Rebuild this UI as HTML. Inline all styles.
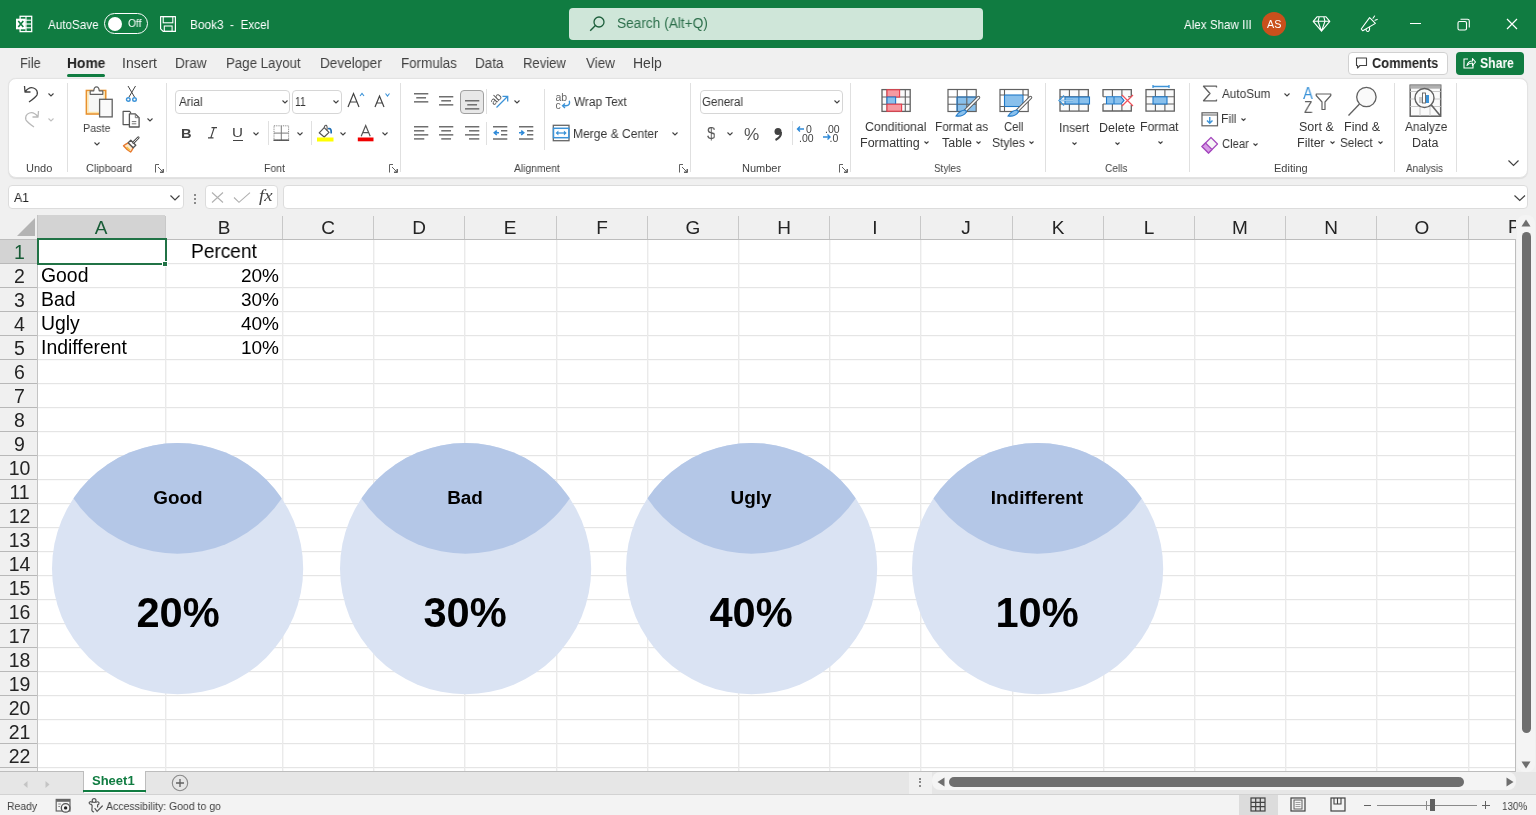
<!DOCTYPE html><html><head><meta charset="utf-8"><title>Excel</title><style>
*{margin:0;padding:0;box-sizing:border-box}
html,body{width:1536px;height:815px;overflow:hidden;background:#f0f0f0;font-family:"Liberation Sans", sans-serif;-webkit-font-smoothing:antialiased}
body>div.r,body>span.t{will-change:transform}
.r{position:absolute;display:block}
.t{position:absolute;white-space:pre;transform-origin:0 0}
svg{overflow:visible}
</style></head><body><div class="r" style="left:0px;top:0px;width:1536px;height:48px;background:#107c41;"></div>
<svg class="r" style="left:15px;top:15px" width="18" height="18" viewBox="0 0 18 18">
      <rect x="5.1" y="1.3" width="11.6" height="15.3" fill="none" stroke="#fff" stroke-width="1.3"/>
      <line x1="5" y1="5.2" x2="16.7" y2="5.2" stroke="#fff" stroke-width="1.1"/>
      <line x1="5" y1="9" x2="16.7" y2="9" stroke="#fff" stroke-width="1.1"/>
      <line x1="5" y1="12.8" x2="16.7" y2="12.8" stroke="#fff" stroke-width="1.1"/>
      <line x1="11" y1="1" x2="11" y2="17" stroke="#fff" stroke-width="1.1"/>
      <rect x="1" y="3.7" width="9.6" height="10.6" fill="#fff"/>
      <path d="M3.3 6 L8.3 12 M8.3 6 L3.3 12" stroke="#107c41" stroke-width="1.6"/>
    </svg>
<span id="autosave" class="t" style="left:48.00px;top:18.00px;font-size:13px;line-height:13px;color:#fff;transform:scaleX(0.8964);">AutoSave</span>
<div class="r" style="left:104px;top:13px;width:44px;height:21px;background:transparent;border:1px solid #fff;border-radius:11px;"></div>
<div class="r" style="left:108.2px;top:17px;width:14px;height:14px;background:#fff;border-radius:50%;"></div>
<span id="off" class="t" style="left:128.00px;top:17.99px;font-size:11px;line-height:11px;color:#fff;transform:scaleX(0.9333);">Off</span>
<svg class="r" style="left:160px;top:16px" width="16" height="16" viewBox="0 0 16 16">
      <path d="M0.6 0.6 H15.4 V15.4 H3.2 L0.6 12.8 Z" fill="none" stroke="#fff" stroke-width="1.2" stroke-linejoin="round"/>
      <rect x="3.2" y="0.6" width="9.6" height="6.2" fill="none" stroke="#fff" stroke-width="1.1"/>
      <rect x="4.3" y="10" width="7.8" height="5.4" fill="none" stroke="#fff" stroke-width="1.1"/>
    </svg>
<span id="book3" class="t" style="left:190.09px;top:18.00px;font-size:13px;line-height:13px;color:#fff;transform:scaleX(0.9070);">Book3  -  Excel</span>
<div class="r" style="left:569px;top:8px;width:414px;height:32px;background:#cfe6d9;border-radius:4px;"></div>
<svg class="r" style="left:589px;top:16px" width="16" height="16" viewBox="0 0 16 16">
      <circle cx="10" cy="6" r="5" fill="none" stroke="#1c5e3b" stroke-width="1.3"/>
      <line x1="6.4" y1="9.6" x2="1.2" y2="14.8" stroke="#1c5e3b" stroke-width="1.4"/>
    </svg>
<span id="search" class="t" style="left:616.82px;top:15.65px;font-size:14px;line-height:14px;color:#2b6e4a;transform:scaleX(0.9769);">Search (Alt+Q)</span>
<span id="alex" class="t" style="left:1184.00px;top:18.00px;font-size:13px;line-height:13px;color:#fff;transform:scaleX(0.8933);">Alex Shaw III</span>
<div class="r" style="left:1262px;top:12px;width:24px;height:24px;background:#c9501c;border-radius:50%;"></div>
<span id="as" class="t" style="left:1267.00px;top:19.54px;font-size:10px;line-height:10px;color:#fff;transform:scaleX(1.0769);">AS</span>
<svg class="r" style="left:1313px;top:15.5px" width="18" height="16" viewBox="0 0 18 16">
      <path d="M4 0.8 H13 L16.8 5.3 L8.5 15.2 L0.2 5.3 Z M0.2 5.3 H16.8 M6.2 0.8 L5 5.3 L8.5 15.2 L12 5.3 L10.8 0.8" fill="none" stroke="#fff" stroke-width="1.1" stroke-linejoin="round"/>
    </svg>
<svg class="r" style="left:1360px;top:15px" width="18" height="18" viewBox="0 0 18 18">
      <path d="M1.2 14 L9.6 2.6 L15.4 8.4 L2.8 15.8 Z" fill="none" stroke="#fff" stroke-width="1.1" stroke-linejoin="round"/>
      <path d="M6 14 Q6.2 16.8 8.2 16.4 Q10 15.8 9.5 12.2" fill="none" stroke="#fff" stroke-width="1.1"/>
      <path d="M13 3.2 L14.6 1 M15 5.2 L17.2 4.4" stroke="#fff" stroke-width="1.1" stroke-linecap="round"/>
    </svg>
<div class="r" style="left:1410px;top:23px;width:11px;height:1.2px;background:#fff;"></div>
<svg class="r" style="left:1457px;top:18px" width="14" height="13" viewBox="0 0 14 13">
      <rect x="1" y="3.5" width="8.5" height="8.5" rx="1.5" fill="none" stroke="#fff" stroke-width="1.1"/>
      <path d="M3.5 1.2 H10.5 Q12.3 1.2 12.3 3 V9.5" fill="none" stroke="#fff" stroke-width="1.1"/>
    </svg>
<svg class="r" style="left:1506px;top:18px" width="12" height="12" viewBox="0 0 12 12">
      <path d="M1 1 L11 11 M11 1 L1 11" stroke="#fff" stroke-width="1.2"/>
    </svg>
<div class="r" style="left:0px;top:48px;width:1536px;height:30px;background:#f0f0f0;"></div>
<span id="tab0" class="t" style="left:20.08px;top:55.75px;font-size:14px;line-height:14px;color:#424242;transform:scaleX(0.9190);">File</span>
<span id="tab1" class="t" style="left:66.51px;top:55.75px;font-size:14px;line-height:14px;color:#242424;font-weight:700;transform:scaleX(0.9868);">Home</span>
<span id="tab2" class="t" style="left:122.00px;top:55.75px;font-size:14px;line-height:14px;color:#424242;">Insert</span>
<span id="tab3" class="t" style="left:175.03px;top:55.75px;font-size:14px;line-height:14px;color:#424242;transform:scaleX(0.9688);">Draw</span>
<span id="tab4" class="t" style="left:226.05px;top:55.75px;font-size:14px;line-height:14px;color:#424242;transform:scaleX(0.9487);">Page Layout</span>
<span id="tab5" class="t" style="left:320.03px;top:55.75px;font-size:14px;line-height:14px;color:#424242;transform:scaleX(0.9683);">Developer</span>
<span id="tab6" class="t" style="left:401.04px;top:55.75px;font-size:14px;line-height:14px;color:#424242;transform:scaleX(0.9579);">Formulas</span>
<span id="tab7" class="t" style="left:475.03px;top:55.75px;font-size:14px;line-height:14px;color:#424242;transform:scaleX(0.9655);">Data</span>
<span id="tab8" class="t" style="left:523.07px;top:55.75px;font-size:14px;line-height:14px;color:#424242;transform:scaleX(0.9333);">Review</span>
<span id="tab9" class="t" style="left:585.60px;top:55.75px;font-size:14px;line-height:14px;color:#424242;transform:scaleX(0.9600);">View</span>
<span id="tab10" class="t" style="left:632.71px;top:55.75px;font-size:14px;line-height:14px;color:#424242;transform:scaleX(0.9857);">Help</span>
<div class="r" style="left:67px;top:74px;width:38px;height:3px;background:#107c41;border-radius:1.5px;"></div>
<div class="r" style="left:1348px;top:51.5px;width:99.5px;height:23px;background:#fff;border:1px solid #d1d1d1;border-radius:4px;"></div>
<svg class="r" style="left:1355px;top:57px" width="13" height="13" viewBox="0 0 13 13">
      <path d="M1.5 1 H11.5 V8.5 H5 L2.5 11 V8.5 H1.5 Z" fill="none" stroke="#424242" stroke-width="1.1" stroke-linejoin="round"/>
    </svg>
<span id="comments" class="t" style="left:1372.00px;top:56.15px;font-size:14px;line-height:14px;color:#242424;font-weight:700;transform:scaleX(0.9167);">Comments</span>
<div class="r" style="left:1456px;top:51.5px;width:67.5px;height:23px;background:#107c41;border-radius:4px;"></div>
<svg class="r" style="left:1462px;top:56px" width="14" height="14" viewBox="0 0 14 14">
      <path d="M6 3 H2 V12 H11 V9" fill="none" stroke="#fff" stroke-width="1.1"/>
      <path d="M5 9.5 Q6 5 10.5 5 V2.5 L13.5 6 L10.5 9.5 V7 Q7 7 5 9.5 Z" fill="none" stroke="#fff" stroke-width="1.1" stroke-linejoin="round"/>
    </svg>
<span id="share" class="t" style="left:1480.00px;top:56.15px;font-size:14px;line-height:14px;color:#fff;font-weight:700;transform:scaleX(0.8718);">Share</span>
<div class="r" style="left:8px;top:78px;width:1520px;height:99.5px;background:#fff;border:1px solid #e3e3e3;border-radius:8px;box-shadow:0 0.5px 1px rgba(0,0,0,0.08);"></div>
<div class="r" style="left:67px;top:83px;width:1px;height:89px;background:#e0e0e0;"></div>
<div class="r" style="left:166px;top:83px;width:1px;height:89px;background:#e0e0e0;"></div>
<div class="r" style="left:400px;top:83px;width:1px;height:89px;background:#e0e0e0;"></div>
<div class="r" style="left:690px;top:83px;width:1px;height:89px;background:#e0e0e0;"></div>
<div class="r" style="left:850px;top:83px;width:1px;height:89px;background:#e0e0e0;"></div>
<div class="r" style="left:1045px;top:83px;width:1px;height:89px;background:#e0e0e0;"></div>
<div class="r" style="left:1189px;top:83px;width:1px;height:89px;background:#e0e0e0;"></div>
<div class="r" style="left:1394px;top:83px;width:1px;height:89px;background:#e0e0e0;"></div>
<div class="r" style="left:1456px;top:83px;width:1px;height:89px;background:#e0e0e0;"></div>
<span id="lab0" class="t" style="left:25.81px;top:163.29px;font-size:11px;line-height:11px;color:#424242;transform:scaleX(0.9920);">Undo</span>
<span id="lab1" class="t" style="left:86.00px;top:163.29px;font-size:11px;line-height:11px;color:#424242;transform:scaleX(0.9787);">Clipboard</span>
<span id="lab2" class="t" style="left:264.05px;top:163.29px;font-size:11px;line-height:11px;color:#424242;transform:scaleX(0.9524);">Font</span>
<span id="lab3" class="t" style="left:514.00px;top:163.29px;font-size:11px;line-height:11px;color:#424242;transform:scaleX(0.9388);">Alignment</span>
<span id="lab4" class="t" style="left:742.00px;top:163.29px;font-size:11px;line-height:11px;color:#424242;">Number</span>
<span id="lab5" class="t" style="left:934.00px;top:163.29px;font-size:11px;line-height:11px;color:#424242;transform:scaleX(0.9000);">Styles</span>
<span id="lab6" class="t" style="left:1105.00px;top:163.29px;font-size:11px;line-height:11px;color:#424242;transform:scaleX(0.9167);">Cells</span>
<span id="lab7" class="t" style="left:1274.00px;top:163.29px;font-size:11px;line-height:11px;color:#424242;">Editing</span>
<span id="lab8" class="t" style="left:1406.00px;top:163.29px;font-size:11px;line-height:11px;color:#424242;transform:scaleX(0.9024);">Analysis</span>
<svg class="r" style="left:155px;top:164px" width="9" height="9" viewBox="0 0 9 9"><path d="M0.5 8.5 V0.5 H4 M8.5 5 V8.5 H5 M3 3 L8 8 M8 5 V8 H5" fill="none" stroke="#616161" stroke-width="1"/></svg>
<svg class="r" style="left:388.5px;top:164px" width="9" height="9" viewBox="0 0 9 9"><path d="M0.5 8.5 V0.5 H4 M8.5 5 V8.5 H5 M3 3 L8 8 M8 5 V8 H5" fill="none" stroke="#616161" stroke-width="1"/></svg>
<svg class="r" style="left:679px;top:164px" width="9" height="9" viewBox="0 0 9 9"><path d="M0.5 8.5 V0.5 H4 M8.5 5 V8.5 H5 M3 3 L8 8 M8 5 V8 H5" fill="none" stroke="#616161" stroke-width="1"/></svg>
<svg class="r" style="left:839px;top:164px" width="9" height="9" viewBox="0 0 9 9"><path d="M0.5 8.5 V0.5 H4 M8.5 5 V8.5 H5 M3 3 L8 8 M8 5 V8 H5" fill="none" stroke="#616161" stroke-width="1"/></svg>
<svg class="r" style="left:1508px;top:160px" width="12" height="7" viewBox="0 0 12 7"><path d="M0.5 0.5 L5.5 5.5 L10.5 0.5" fill="none" stroke="#424242" stroke-width="1.2"/></svg>
<svg class="r" style="left:23px;top:84px" width="17" height="18" viewBox="0 0 17 18"><path d="M2 8 L1.5 2 M1.5 8 H7.5 M2 8 Q6 2.5 10.5 4 Q15.5 6 14 11 Q13 13 6 18" fill="none" stroke="#424242" stroke-width="1.3" stroke-linejoin="round"/></svg>
<svg class="r" style="left:48px;top:93px" width="6" height="4.0" viewBox="0 0 6 4.0"><path d="M0.5 0.5 L3.0 3.0 L5.5 0.5" fill="none" stroke="#424242" stroke-width="1.1"/></svg>
<svg class="r" style="left:23px;top:109px" width="17" height="18" viewBox="0 0 17 18"><path d="M15 8 L15.5 2 M15.5 8 H9.5 M15 8 Q11 2.5 6.5 4 Q1.5 6 3 11 Q4 13 11 18" fill="none" stroke="#b9b9b9" stroke-width="1.3" stroke-linejoin="round"/></svg>
<svg class="r" style="left:48px;top:118px" width="6" height="4.0" viewBox="0 0 6 4.0"><path d="M0.5 0.5 L3.0 3.0 L5.5 0.5" fill="none" stroke="#c0c0c0" stroke-width="1.1"/></svg>
<svg class="r" style="left:84px;top:85px" width="30" height="34" viewBox="0 0 30 34">
      <rect x="2.4" y="5.5" width="19.3" height="23.5" fill="#f7f7f7" stroke="#e8912d" stroke-width="1.6"/><rect x="4" y="7.1" width="16.1" height="20.3" fill="none" stroke="#fde4a6" stroke-width="1.2"/>
      <path d="M6.2 9.3 V5.8 H9.8 Q10 1.8 12.5 1.8 Q15 1.8 15.2 5.8 H18.8 V9.3 Z" fill="#fff" stroke="#616161" stroke-width="1.2" stroke-linejoin="round"/>
      <rect x="15.6" y="14.3" width="12.6" height="17.6" fill="#fafafa" stroke="#616161" stroke-width="1.3"/>
    </svg>
<span id="paste" class="t" style="left:82.86px;top:122.87px;font-size:11.5px;line-height:11.5px;color:#424242;transform:scaleX(0.9357);">Paste</span>
<svg class="r" style="left:93.5px;top:142px" width="6" height="4.0" viewBox="0 0 6 4.0"><path d="M0.5 0.5 L3.0 3.0 L5.5 0.5" fill="none" stroke="#424242" stroke-width="1.1"/></svg>
<svg class="r" style="left:125px;top:85px" width="14" height="17" viewBox="0 0 14 17">
      <path d="M3 1 L9.5 12 M10.5 1 L4 12" stroke="#424242" stroke-width="1" fill="none"/>
      <circle cx="3.3" cy="14.5" r="1.8" fill="none" stroke="#3c93d8" stroke-width="1.4"/>
      <circle cx="9.5" cy="14.5" r="1.8" fill="none" stroke="#3c93d8" stroke-width="1.4"/>
    </svg>
<svg class="r" style="left:122px;top:110px" width="18" height="18" viewBox="0 0 18 18">
      <path d="M7.4 14.6 H1.1 V1.4 H7.6 L8.6 2.4 V3.6" fill="none" stroke="#555" stroke-width="1.2" stroke-linejoin="round"/>
      <path d="M7.4 3.9 H13.3 L17.1 7.7 V17 H7.4 Z" fill="#fff" stroke="#555" stroke-width="1.3" stroke-linejoin="round"/>
      <path d="M13.3 3.9 V7.7 H17.1 M9.8 11.6 H14.3 M9.8 13.8 H14.3" fill="none" stroke="#777" stroke-width="1"/>
    </svg>
<svg class="r" style="left:147.3px;top:117.6px" width="6" height="4.0" viewBox="0 0 6 4.0"><path d="M0.5 0.5 L3.0 3.0 L5.5 0.5" fill="none" stroke="#424242" stroke-width="1.1"/></svg>
<svg class="r" style="left:122px;top:136px" width="18" height="17" viewBox="0 0 18 17">
      <path d="M6.2 6.8 L11.2 11.8 Q10 14.5 8.6 16 Q4.5 13.5 1.5 9.8 Q4 7.8 6.2 6.8 Z" fill="#fdebd0" stroke="#e8792d" stroke-width="1.4" stroke-linejoin="round"/>
      <path d="M4.5 11 L8 14.3" stroke="#f5c04a" stroke-width="1.6"/>
      <path d="M8.8 4.2 L13.8 9.2 L11.2 11.8 L6.2 6.8 Z" fill="#fff" stroke="#555" stroke-width="1.3" stroke-linejoin="round"/>
      <path d="M11.5 6.5 L16.3 1.7" stroke="#555" stroke-width="2.6" stroke-linecap="round"/>
      <path d="M11.7 6.3 L16.1 1.9" stroke="#fff" stroke-width="0.8" stroke-linecap="round"/>
    </svg>
<div class="r" style="left:175px;top:89.5px;width:115px;height:24px;background:#fff;border:1px solid #d6d6d6;border-radius:4px;"></div>
<span id="arial" class="t" style="left:178.50px;top:95.92px;font-size:12.5px;line-height:12.5px;color:#363636;transform:scaleX(0.9400);">Arial</span>
<svg class="r" style="left:281.5px;top:100px" width="6" height="4.0" viewBox="0 0 6 4.0"><path d="M0.5 0.5 L3.0 3.0 L5.5 0.5" fill="none" stroke="#424242" stroke-width="1.1"/></svg>
<div class="r" style="left:292px;top:89.5px;width:49.5px;height:24px;background:#fff;border:1px solid #d6d6d6;border-radius:4px;"></div>
<span id="fs11" class="t" style="left:295.17px;top:95.92px;font-size:12.5px;line-height:12.5px;color:#363636;transform:scaleX(0.8333);">11</span>
<svg class="r" style="left:333px;top:100px" width="6" height="4.0" viewBox="0 0 6 4.0"><path d="M0.5 0.5 L3.0 3.0 L5.5 0.5" fill="none" stroke="#424242" stroke-width="1.1"/></svg>
<svg class="r" style="left:347px;top:92px" width="18" height="16" viewBox="0 0 18 16"><path d="M1 15 L6.5 1.5 L12 15 M3.2 10 H9.8" fill="none" stroke="#424242" stroke-width="1.2"/><path d="M13 4 L15 1.5 L17 4" fill="none" stroke="#3c93d8" stroke-width="1.1"/></svg>
<svg class="r" style="left:374px;top:92px" width="16" height="16" viewBox="0 0 16 16"><path d="M1 15 L5.5 4 L10 15 M2.8 11 H8.2" fill="none" stroke="#424242" stroke-width="1.2"/><path d="M11.5 1.5 L13.5 4 L15.5 1.5" fill="none" stroke="#3c93d8" stroke-width="1.1"/></svg>
<span id="bold" class="t" style="left:181.38px;top:126.50px;font-size:13px;line-height:13px;color:#424242;font-weight:700;transform:scaleX(1.1250);">B</span>
<svg class="r" style="left:207px;top:127px" width="11" height="12" viewBox="0 0 11 12"><path d="M4.5 0.6 H10 M1 10.9 H6.5 M7.2 0.6 L3.8 10.9" stroke="#424242" stroke-width="1.2" fill="none"/></svg>
<span id="undl" class="t" style="left:231.88px;top:126.07px;font-size:13.5px;line-height:13.5px;color:#424242;transform:scaleX(1.1250);">U</span>
<div class="r" style="left:233px;top:139.5px;width:9.5px;height:1.2px;background:#424242;"></div>
<svg class="r" style="left:253px;top:132px" width="6" height="4.0" viewBox="0 0 6 4.0"><path d="M0.5 0.5 L3.0 3.0 L5.5 0.5" fill="none" stroke="#424242" stroke-width="1.1"/></svg>
<div class="r" style="left:267.5px;top:121px;width:1px;height:24px;background:#e0e0e0;"></div>
<svg class="r" style="left:273px;top:125px" width="17" height="17" viewBox="0 0 17 17"><rect x="1" y="0.8" width="14.6" height="14.6" fill="none" stroke="#8a8a8a" stroke-width="1" stroke-dasharray="1 0.8"/><path d="M8.3 0.8 V15 M1 8.1 H15.6" stroke="#7a7a7a" stroke-width="1"/><path d="M0.5 15.2 H16.1" stroke="#555" stroke-width="1.5"/></svg>
<svg class="r" style="left:297px;top:132px" width="6" height="4.0" viewBox="0 0 6 4.0"><path d="M0.5 0.5 L3.0 3.0 L5.5 0.5" fill="none" stroke="#424242" stroke-width="1.1"/></svg>
<div class="r" style="left:310.5px;top:121px;width:1px;height:24px;background:#e0e0e0;"></div>
<svg class="r" style="left:316px;top:124px" width="19" height="19" viewBox="0 0 19 19">
      <path d="M3.2 8.8 L8.2 3.6 L13 8.4 L8.2 13 Z" fill="none" stroke="#555" stroke-width="1.2" stroke-linejoin="round"/>
      <path d="M8.2 3.6 Q8.8 0.8 10.2 1.3 Q11.5 1.8 11 6.4" fill="none" stroke="#555" stroke-width="1.1"/>
      <path d="M12.8 4.6 Q15.4 4.2 15.2 8.8" fill="none" stroke="#1f6fb5" stroke-width="1.7" stroke-linecap="round"/>
      <rect x="1" y="13.5" width="16.5" height="4" fill="#ffff00"/>
    </svg>
<svg class="r" style="left:340px;top:132px" width="6" height="4.0" viewBox="0 0 6 4.0"><path d="M0.5 0.5 L3.0 3.0 L5.5 0.5" fill="none" stroke="#424242" stroke-width="1.1"/></svg>
<svg class="r" style="left:356px;top:124px" width="18" height="19" viewBox="0 0 18 19">
      <path d="M5.2 12.3 L9.7 1.5 L14.2 12.3 M6.7 8.6 H12.7" fill="none" stroke="#555" stroke-width="1.2"/>
      <rect x="1.8" y="13.5" width="15.7" height="3.8" fill="#f00000"/>
    </svg>
<svg class="r" style="left:382px;top:132px" width="6" height="4.0" viewBox="0 0 6 4.0"><path d="M0.5 0.5 L3.0 3.0 L5.5 0.5" fill="none" stroke="#424242" stroke-width="1.1"/></svg>
<svg class="r" style="left:413.7px;top:93.2px" width="14.3" height="12.149999999999999" viewBox="0 0 14.3 12.149999999999999"><path d="M0 0.75 H14.3" stroke="#6e6e6e" stroke-width="1.5"/><path d="M2.25 4.8 H12.05" stroke="#6e6e6e" stroke-width="1.5"/><path d="M0 8.85 H14.3" stroke="#6e6e6e" stroke-width="1.5"/></svg>
<svg class="r" style="left:439.2px;top:96.2px" width="14.3" height="12.149999999999999" viewBox="0 0 14.3 12.149999999999999"><path d="M0 0.75 H14.3" stroke="#6e6e6e" stroke-width="1.5"/><path d="M2.25 4.8 H12.05" stroke="#6e6e6e" stroke-width="1.5"/><path d="M0 8.85 H14.3" stroke="#6e6e6e" stroke-width="1.5"/></svg>
<div class="r" style="left:460px;top:89.5px;width:24px;height:24px;background:#e8e8e8;border:1px solid #a0a0a0;border-radius:4px;"></div>
<svg class="r" style="left:465px;top:100.3px" width="14.3" height="12.149999999999999" viewBox="0 0 14.3 12.149999999999999"><path d="M0 0.75 H14.3" stroke="#6e6e6e" stroke-width="1.5"/><path d="M2.25 4.8 H12.05" stroke="#6e6e6e" stroke-width="1.5"/><path d="M0 8.85 H14.3" stroke="#6e6e6e" stroke-width="1.5"/></svg>
<div class="r" style="left:485.5px;top:89px;width:1px;height:24.5px;background:#e0e0e0;"></div>
<svg class="r" style="left:490px;top:91px" width="20" height="18" viewBox="0 0 20 18">
      <text x="-0.5" y="12" font-size="11" font-family="Liberation Sans" fill="#555" transform="rotate(-45 5 8)">ab</text>
      <path d="M6.5 16.5 L17.5 5.5 M12.5 5.3 H17.7 V10.5" fill="none" stroke="#3c93d8" stroke-width="1.3"/>
    </svg>
<svg class="r" style="left:514px;top:99.5px" width="6" height="4.0" viewBox="0 0 6 4.0"><path d="M0.5 0.5 L3.0 3.0 L5.5 0.5" fill="none" stroke="#424242" stroke-width="1.1"/></svg>
<div class="r" style="left:543.5px;top:89px;width:1px;height:61px;background:#e0e0e0;"></div>
<svg class="r" style="left:413.7px;top:126.2px" width="14.3" height="16.2" viewBox="0 0 14.3 16.2"><path d="M0 0.75 H14.3" stroke="#6e6e6e" stroke-width="1.5"/><path d="M0 4.8 H10.3" stroke="#6e6e6e" stroke-width="1.5"/><path d="M0 8.85 H14.3" stroke="#6e6e6e" stroke-width="1.5"/><path d="M0 12.899999999999999 H10.3" stroke="#6e6e6e" stroke-width="1.5"/></svg>
<svg class="r" style="left:439.2px;top:126.2px" width="14.3" height="16.2" viewBox="0 0 14.3 16.2"><path d="M0 0.75 H14.3" stroke="#6e6e6e" stroke-width="1.5"/><path d="M2.25 4.8 H12.05" stroke="#6e6e6e" stroke-width="1.5"/><path d="M0 8.85 H14.3" stroke="#6e6e6e" stroke-width="1.5"/><path d="M2.25 12.899999999999999 H12.05" stroke="#6e6e6e" stroke-width="1.5"/></svg>
<svg class="r" style="left:465px;top:126.2px" width="14.3" height="16.2" viewBox="0 0 14.3 16.2"><path d="M0 0.75 H14.3" stroke="#6e6e6e" stroke-width="1.5"/><path d="M4 4.8 H14.3" stroke="#6e6e6e" stroke-width="1.5"/><path d="M0 8.85 H14.3" stroke="#6e6e6e" stroke-width="1.5"/><path d="M4 12.899999999999999 H14.3" stroke="#6e6e6e" stroke-width="1.5"/></svg>
<div class="r" style="left:485.5px;top:122px;width:1px;height:23px;background:#e0e0e0;"></div>
<svg class="r" style="left:493px;top:126px" width="15" height="14" viewBox="0 0 15 14"><path d="M0 0.75 H14.3 M8 4.8 H14.3 M8 8.85 H14.3 M0 12.9 H14.3" stroke="#6e6e6e" stroke-width="1.5"/><path d="M6 6.8 H1.5 M3.8 4.6 L1.3 6.8 L3.8 9" fill="none" stroke="#2f8ad8" stroke-width="1.6"/></svg>
<svg class="r" style="left:518.5px;top:126px" width="15" height="14" viewBox="0 0 15 14"><path d="M0 0.75 H14.3 M8 4.8 H14.3 M8 8.85 H14.3 M0 12.9 H14.3" stroke="#6e6e6e" stroke-width="1.5"/><path d="M0 6.8 H4.5 M2.2 4.6 L4.7 6.8 L2.2 9" fill="none" stroke="#2f8ad8" stroke-width="1.6"/></svg>
<svg class="r" style="left:555px;top:93px" width="17" height="18" viewBox="0 0 17 18">
      <text x="0.5" y="8.4" font-size="10.5" font-family="Liberation Sans" fill="#666">ab</text>
      <text x="0.5" y="15.8" font-size="10.5" font-family="Liberation Sans" fill="#666">c</text>
      <path d="M14.3 7.8 Q15.6 12.6 10.8 12.8 H8" fill="none" stroke="#3c93d8" stroke-width="1.4"/>
      <path d="M10 10.6 L7.6 12.8 L10 15" fill="none" stroke="#3c93d8" stroke-width="1.4"/>
    </svg>
<span id="wrap" class="t" style="left:574.00px;top:95.92px;font-size:12.5px;line-height:12.5px;color:#363636;transform:scaleX(0.9464);">Wrap Text</span>
<svg class="r" style="left:552px;top:124px" width="18" height="18" viewBox="0 0 18 18">
      <rect x="1.3" y="1.3" width="15.7" height="15.4" fill="#fff" stroke="#666" stroke-width="1.3"/>
      <rect x="1.5" y="4.3" width="15.3" height="9.4" fill="#fff" stroke="#3c93d8" stroke-width="1.5"/>
      <path d="M6 9 H12.3" stroke="#3c93d8" stroke-width="1.3"/>
      <path d="M3.6 9 L6.4 6.6 V11.4 Z M14.7 9 L11.9 6.6 V11.4 Z" fill="#3c93d8"/>
    </svg>
<span id="merge" class="t" style="left:573.03px;top:127.92px;font-size:12.5px;line-height:12.5px;color:#363636;transform:scaleX(0.9655);">Merge &amp; Center</span>
<svg class="r" style="left:672px;top:132px" width="6" height="4.0" viewBox="0 0 6 4.0"><path d="M0.5 0.5 L3.0 3.0 L5.5 0.5" fill="none" stroke="#424242" stroke-width="1.1"/></svg>
<div class="r" style="left:699.5px;top:89.5px;width:143px;height:24px;background:#fff;border:1px solid #d6d6d6;border-radius:4px;"></div>
<span id="general" class="t" style="left:701.50px;top:95.92px;font-size:12.5px;line-height:12.5px;color:#363636;transform:scaleX(0.9205);">General</span>
<svg class="r" style="left:834px;top:100px" width="6" height="4.0" viewBox="0 0 6 4.0"><path d="M0.5 0.5 L3.0 3.0 L5.5 0.5" fill="none" stroke="#424242" stroke-width="1.1"/></svg>
<span id="dollar" class="t" style="left:706.50px;top:125.96px;font-size:16px;line-height:16px;color:#555;transform:scaleX(0.9444);">$</span>
<svg class="r" style="left:727px;top:132px" width="6" height="4.0" viewBox="0 0 6 4.0"><path d="M0.5 0.5 L3.0 3.0 L5.5 0.5" fill="none" stroke="#424242" stroke-width="1.1"/></svg>
<span id="pct" class="t" style="left:744.00px;top:126.96px;font-size:16px;line-height:16px;color:#555;transform:scaleX(1.0714);">%</span>
<svg class="r" style="left:773px;top:127px" width="10" height="14" viewBox="0 0 10 14"><circle cx="5" cy="4.5" r="3.5" fill="#424242"/><path d="M8 5 Q8.5 10 2.5 13" fill="none" stroke="#424242" stroke-width="2"/></svg>
<div class="r" style="left:791.5px;top:121px;width:1px;height:24px;background:#e0e0e0;"></div>
<svg class="r" style="left:796px;top:124px" width="18" height="18" viewBox="0 0 18 18">
      <path d="M8 5 H1.5 M4 2.5 L1.5 5 L4 7.5" fill="none" stroke="#2f8ad8" stroke-width="1.4"/>
      <text x="10" y="9" font-size="10.5" font-family="Liberation Sans" fill="#424242">0</text>
      <text x="3" y="17.5" font-size="10.5" font-family="Liberation Sans" fill="#424242">.00</text>
    </svg>
<svg class="r" style="left:822px;top:124px" width="18" height="18" viewBox="0 0 18 18">
      <text x="3" y="9" font-size="10.5" font-family="Liberation Sans" fill="#424242">.00</text>
      <path d="M1 13 H8 M5.5 10.5 L8 13 L5.5 15.5" fill="none" stroke="#2f8ad8" stroke-width="1.4"/>
      <text x="7.5" y="17.5" font-size="10.5" font-family="Liberation Sans" fill="#424242">.0</text>
    </svg>
<svg class="r" style="left:881px;top:89px" width="30" height="23" viewBox="0 0 30 23">
      <rect x="1" y="0.6" width="28.2" height="21.8" fill="#fafafa" stroke="#616161" stroke-width="1.3"/>
      <path d="M1 8 H29 M1 15.2 H29 M6 0.6 V22.4 M24.3 0.6 V22.4" stroke="#616161" stroke-width="1.1"/>
      <rect x="6" y="0.8" width="12.6" height="7.2" fill="#f59aa2" stroke="#e83c4a" stroke-width="1.1"/>
      <rect x="6" y="8" width="8.6" height="7.2" fill="#89c0ec" stroke="#1f78c8" stroke-width="1.1"/>
      <rect x="6" y="15.2" width="14.6" height="7" fill="#f59aa2" stroke="#e83c4a" stroke-width="1.1"/>
    </svg>
<span id="cf1" class="t" style="left:865.00px;top:120.92px;font-size:12.5px;line-height:12.5px;color:#363636;transform:scaleX(0.9839);">Conditional</span>
<span id="cf2" class="t" style="left:860.00px;top:136.92px;font-size:12.5px;line-height:12.5px;color:#363636;">Formatting</span>
<svg class="r" style="left:923.5px;top:141px" width="5" height="3.5" viewBox="0 0 5 3.5"><path d="M0.5 0.5 L2.5 2.5 L4.5 0.5" fill="none" stroke="#424242" stroke-width="1.1"/></svg>
<svg class="r" style="left:947px;top:89px" width="33" height="29" viewBox="0 0 33 29">
      <rect x="10" y="8" width="19" height="14.5" fill="#89c0ec"/>
      <rect x="1" y="0.5" width="28.2" height="22" fill="none" stroke="#616161" stroke-width="1.2"/>
      <path d="M1 8 H29 M1 15.2 H29 M10.3 0.5 V22.5 M19.8 0.5 V22.5" stroke="#616161" stroke-width="1.1"/>
      <path d="M10 8 H29 M10 8 V22.5" stroke="#1f78c8" stroke-width="1.1"/>
      <path d="M31.5 8.5 L18 22" stroke="#616161" stroke-width="3.5" stroke-linecap="round"/>
      <path d="M31.5 8.5 L18 22" stroke="#fff" stroke-width="1.5" stroke-linecap="round"/>
      <path d="M18.5 21 Q13 21 9 27 Q16 28 19.5 23 Z" fill="#89c0ec" stroke="#1f78c8" stroke-width="1.1"/>
    </svg>
<span id="fat1" class="t" style="left:935.05px;top:120.92px;font-size:12.5px;line-height:12.5px;color:#363636;transform:scaleX(0.9455);">Format as</span>
<span id="fat2" class="t" style="left:942.00px;top:136.92px;font-size:12.5px;line-height:12.5px;color:#363636;">Table</span>
<svg class="r" style="left:976px;top:141px" width="5" height="3.5" viewBox="0 0 5 3.5"><path d="M0.5 0.5 L2.5 2.5 L4.5 0.5" fill="none" stroke="#424242" stroke-width="1.1"/></svg>
<svg class="r" style="left:999px;top:89px" width="33" height="29" viewBox="0 0 33 29">
      <rect x="5.5" y="6" width="18.5" height="11.5" fill="#89c0ec" stroke="#1f78c8" stroke-width="1.1"/>
      <rect x="1" y="0.5" width="28.2" height="22" fill="none" stroke="#616161" stroke-width="1.2"/>
      <path d="M1 6 H5.5 M1 17.5 H5.5 M24 6 H29 M5.5 0.5 V6 M24 0.5 V6 M5.5 17.5 V22.5" stroke="#616161" stroke-width="1.1"/>
      <path d="M31.5 8.5 L18 22" stroke="#616161" stroke-width="3.5" stroke-linecap="round"/>
      <path d="M31.5 8.5 L18 22" stroke="#fff" stroke-width="1.5" stroke-linecap="round"/>
      <path d="M18.5 21 Q13 21 9 27 Q16 28 19.5 23 Z" fill="#89c0ec" stroke="#1f78c8" stroke-width="1.1"/>
    </svg>
<span id="cs1" class="t" style="left:1004.00px;top:120.92px;font-size:12.5px;line-height:12.5px;color:#363636;transform:scaleX(0.9048);">Cell</span>
<span id="cs2" class="t" style="left:992.03px;top:136.92px;font-size:12.5px;line-height:12.5px;color:#363636;transform:scaleX(0.9697);">Styles</span>
<svg class="r" style="left:1029px;top:141px" width="5" height="3.5" viewBox="0 0 5 3.5"><path d="M0.5 0.5 L2.5 2.5 L4.5 0.5" fill="none" stroke="#424242" stroke-width="1.1"/></svg>
<svg class="r" style="left:1058px;top:89px" width="33" height="23" viewBox="0 0 33 23"><rect x="2" y="0.6" width="28.3" height="21.5" fill="#fafafa" stroke="#616161" stroke-width="1.3"/>
      <path d="M2 7.8 H30.3 M2 15 H30.3 M11.4 0.6 V22 M20.9 0.6 V22" stroke="#616161" stroke-width="1.1"/>
      <rect x="7" y="8" width="24.5" height="7" fill="#89c0ec" stroke="#1f78c8" stroke-width="1.1"/>
      <path d="M20.9 8 V15" stroke="#1f78c8" stroke-width="1"/>
      <path d="M15 11.5 H1.5 M6 6.5 L1 11.5 L6 16.5" fill="none" stroke="#3c93d8" stroke-width="1.3"/>
      <path d="M15 11.5 H1.5" stroke="#fff" stroke-width="0.5"/>
    </svg>
<svg class="r" style="left:1102px;top:89px" width="33" height="23" viewBox="0 0 33 23">
      <path d="M1 7.8 V0.6 H29.3 V7.8 M1 15 V22 H29.3 V16" fill="#fafafa" stroke="#616161" stroke-width="1.3"/>
      <path d="M10.4 0.6 V7.8 M19.9 0.6 V7.8 M10.4 15 V22 M19.9 15 V22 M1 7.8 H4 M1 15 H4 M26 7.8 H29.3" stroke="#616161" stroke-width="1.1"/>
      <path d="M4.5 7.8 H19 L22 11.4 L19 15 H4.5 Z" fill="#89c0ec" stroke="#1f78c8" stroke-width="1.1"/>
      <path d="M12 7.8 V15" stroke="#1f78c8" stroke-width="1"/>
      <path d="M20 6 L31 17 M31 6 L20 17" stroke="#f0505a" stroke-width="1.2"/>
    </svg>
<svg class="r" style="left:1145px;top:85px" width="31" height="28" viewBox="0 0 31 28">
      <path d="M8 1.5 H24 M8 0 V3 M24 0 V3" stroke="#3c93d8" stroke-width="1.3"/>
      <g transform="translate(0,4)"><rect x="1" y="0.6" width="28.3" height="21.5" fill="#fafafa" stroke="#616161" stroke-width="1.3"/>
      <path d="M1 7.8 H29.3 M1 15 H29.3 M10.4 0.6 V22 M19.9 0.6 V22" stroke="#616161" stroke-width="1.1"/>
      <rect x="8" y="7.8" width="14" height="7.2" fill="#89c0ec" stroke="#1f78c8" stroke-width="1.1"/></g>
    </svg>
<span id="ins" class="t" style="left:1059.03px;top:122.42px;font-size:12.5px;line-height:12.5px;color:#363636;transform:scaleX(0.9667);">Insert</span>
<svg class="r" style="left:1071.5px;top:142px" width="5" height="3.5" viewBox="0 0 5 3.5"><path d="M0.5 0.5 L2.5 2.5 L4.5 0.5" fill="none" stroke="#424242" stroke-width="1.1"/></svg>
<span id="del" class="t" style="left:1099.00px;top:122.42px;font-size:12.5px;line-height:12.5px;color:#363636;">Delete</span>
<svg class="r" style="left:1114.5px;top:142px" width="5" height="3.5" viewBox="0 0 5 3.5"><path d="M0.5 0.5 L2.5 2.5 L4.5 0.5" fill="none" stroke="#424242" stroke-width="1.1"/></svg>
<span id="fmt" class="t" style="left:1140.03px;top:120.92px;font-size:12.5px;line-height:12.5px;color:#363636;transform:scaleX(0.9744);">Format</span>
<svg class="r" style="left:1157.5px;top:141px" width="5" height="3.5" viewBox="0 0 5 3.5"><path d="M0.5 0.5 L2.5 2.5 L4.5 0.5" fill="none" stroke="#424242" stroke-width="1.1"/></svg>
<svg class="r" style="left:1202px;top:85px" width="16" height="17" viewBox="0 0 16 17"><path d="M14.5 2.5 V1.2 H1.5 L8 8.5 L1.5 15.8 H14.5 V14.5" fill="none" stroke="#616161" stroke-width="1.3" stroke-linejoin="round"/></svg>
<span id="autosum" class="t" style="left:1222.00px;top:88.02px;font-size:12.5px;line-height:12.5px;color:#363636;transform:scaleX(0.9412);">AutoSum</span>
<svg class="r" style="left:1283.5px;top:93px" width="6" height="4.0" viewBox="0 0 6 4.0"><path d="M0.5 0.5 L3.0 3.0 L5.5 0.5" fill="none" stroke="#424242" stroke-width="1.1"/></svg>
<svg class="r" style="left:1201px;top:112px" width="18" height="15" viewBox="0 0 18 15">
      <rect x="1" y="0.8" width="15.5" height="13" fill="#fff" stroke="#616161" stroke-width="1.2"/>
      <path d="M1 3 H16.5" stroke="#616161" stroke-width="1"/>
      <path d="M8.75 5 V11 M6 8.5 L8.75 11.3 L11.5 8.5" fill="none" stroke="#3c93d8" stroke-width="1.4"/>
    </svg>
<span id="fill" class="t" style="left:1221.03px;top:113.42px;font-size:12.5px;line-height:12.5px;color:#363636;transform:scaleX(0.9667);">Fill</span>
<svg class="r" style="left:1241px;top:118px" width="5" height="3.5" viewBox="0 0 5 3.5"><path d="M0.5 0.5 L2.5 2.5 L4.5 0.5" fill="none" stroke="#424242" stroke-width="1.1"/></svg>
<svg class="r" style="left:1201px;top:136px" width="18" height="18" viewBox="0 0 18 18">
      <path d="M1 10.5 L10 1.5 L16.5 8 L7.5 17 Z" fill="#f6f6f6" stroke="#a74cbf" stroke-width="1.3" stroke-linejoin="round"/>
      <path d="M1 10.5 L4.5 7 L11 13.5 L7.5 17 Z" fill="#d79ae6" stroke="#a74cbf" stroke-width="1.3" stroke-linejoin="round"/>
    </svg>
<span id="clear" class="t" style="left:1222.00px;top:138.42px;font-size:12.5px;line-height:12.5px;color:#363636;transform:scaleX(0.9000);">Clear</span>
<svg class="r" style="left:1253px;top:143px" width="5" height="3.5" viewBox="0 0 5 3.5"><path d="M0.5 0.5 L2.5 2.5 L4.5 0.5" fill="none" stroke="#424242" stroke-width="1.1"/></svg>
<span id="sortA" class="t" style="left:1303.30px;top:85.96px;font-size:16px;line-height:16px;color:#3c93d8;transform:scaleX(0.9273);">A</span>
<span id="sortZ" class="t" style="left:1303.50px;top:100.06px;font-size:16px;line-height:16px;color:#616161;transform:scaleX(0.8500);">Z</span>
<svg class="r" style="left:1315px;top:93px" width="18" height="18" viewBox="0 0 18 18"><path d="M1.2 1 H15.8 V2.5 L10 9 V16.5 H7 V9 L1.2 2.5 Z" fill="none" stroke="#616161" stroke-width="1.2" stroke-linejoin="round"/></svg>
<span id="sort1" class="t" style="left:1299.00px;top:120.92px;font-size:12.5px;line-height:12.5px;color:#363636;">Sort &amp;</span>
<span id="sort2" class="t" style="left:1297.00px;top:136.92px;font-size:12.5px;line-height:12.5px;color:#363636;">Filter</span>
<svg class="r" style="left:1329.5px;top:141px" width="5" height="3.5" viewBox="0 0 5 3.5"><path d="M0.5 0.5 L2.5 2.5 L4.5 0.5" fill="none" stroke="#424242" stroke-width="1.1"/></svg>
<svg class="r" style="left:1347px;top:86px" width="32" height="31" viewBox="0 0 32 31"><circle cx="19.4" cy="11" r="9.7" fill="#fafafa" stroke="#616161" stroke-width="1.3"/><path d="M12.5 18 L1.5 29.5" stroke="#616161" stroke-width="1.3"/></svg>
<span id="find1" class="t" style="left:1344.00px;top:120.92px;font-size:12.5px;line-height:12.5px;color:#363636;">Find &amp;</span>
<span id="find2" class="t" style="left:1340.06px;top:136.92px;font-size:12.5px;line-height:12.5px;color:#363636;transform:scaleX(0.9412);">Select</span>
<svg class="r" style="left:1377.5px;top:141px" width="5" height="3.5" viewBox="0 0 5 3.5"><path d="M0.5 0.5 L2.5 2.5 L4.5 0.5" fill="none" stroke="#424242" stroke-width="1.1"/></svg>
<svg class="r" style="left:1409px;top:84px" width="34" height="34" viewBox="0 0 34 34">
      <rect x="1.2" y="1.2" width="30.5" height="31" fill="#fafafa" stroke="#616161" stroke-width="1.5"/>
      <rect x="1.2" y="1.2" width="30.5" height="3.5" fill="#b0b0b0"/>
      <path d="M1.2 7.5 H31.7 M1.2 15 H31.7 M1.2 22.5 H31.7 M11 22 V32 M21 22 V32" stroke="#c8c8c8" stroke-width="1"/>
      <circle cx="15.5" cy="14" r="9.5" fill="#fafafa" stroke="#616161" stroke-width="1.4"/>
      <rect x="10" y="13" width="3" height="6" fill="#c8c8c8"/>
      <rect x="13.5" y="9" width="3" height="10" fill="#fff" stroke="#616161" stroke-width="0.9"/>
      <rect x="17" y="11" width="3" height="8" fill="#3c93d8"/>
      <path d="M22 20.5 L31 31.5" stroke="#616161" stroke-width="1.6"/>
    </svg>
<span id="an1" class="t" style="left:1405.00px;top:120.92px;font-size:12.5px;line-height:12.5px;color:#363636;transform:scaleX(0.9545);">Analyze</span>
<span id="an2" class="t" style="left:1412.00px;top:136.92px;font-size:12.5px;line-height:12.5px;color:#363636;">Data</span>
<div class="r" style="left:8px;top:185px;width:176px;height:23.5px;background:#fff;border:1px solid #dcdcdc;border-radius:4px;"></div>
<span id="a1" class="t" style="left:13.70px;top:190.80px;font-size:13px;line-height:13px;color:#242424;transform:scaleX(0.9375);">A1</span>
<svg class="r" style="left:170px;top:195px" width="10" height="6" viewBox="0 0 10 6"><path d="M0.5 0.5 L5 5 L9.5 0.5" fill="none" stroke="#424242" stroke-width="1.2"/></svg>
<div class="r" style="left:193.8px;top:193.5px;width:1.6px;height:1.6px;background:#8a8a8a;"></div>
<div class="r" style="left:193.8px;top:197.5px;width:1.6px;height:1.6px;background:#8a8a8a;"></div>
<div class="r" style="left:193.8px;top:201.5px;width:1.6px;height:1.6px;background:#8a8a8a;"></div>
<div class="r" style="left:205px;top:185px;width:73px;height:23.5px;background:#fff;border:1px solid #dcdcdc;border-radius:4px;"></div>
<svg class="r" style="left:211px;top:192px" width="13" height="11" viewBox="0 0 13 11"><path d="M1 0.5 L12 10.5 M12 0.5 L1 10.5" stroke="#b0b0b0" stroke-width="1.1"/></svg>
<svg class="r" style="left:233px;top:192px" width="18" height="11" viewBox="0 0 18 11"><path d="M1 5.5 L6 10.3 L17 0.7" fill="none" stroke="#b0b0b0" stroke-width="1.1"/></svg>
<span id="fx" class="t" style="left:259.00px;top:188.46px;font-size:16px;line-height:16px;color:#424242;font-style:italic;font-family:'Liberation Serif', serif;transform:scaleX(1.1667);">fx</span>
<div class="r" style="left:282.5px;top:185px;width:1244.5px;height:23.5px;background:#fff;border:1px solid #dcdcdc;border-radius:4px;"></div>
<svg class="r" style="left:1514px;top:195px" width="12" height="7" viewBox="0 0 12 7"><path d="M0.5 0.5 L5.75 5.5 L11 0.5" fill="none" stroke="#424242" stroke-width="1.2"/></svg>
<div class="r" style="left:0px;top:215px;width:1516px;height:24px;background:#f0f0f0;"></div>
<div class="r" style="left:38px;top:215px;width:127px;height:24px;background:#d3d3d3;"></div>
<svg class="r" style="left:16px;top:217px" width="20" height="20" viewBox="0 0 20 20"><path d="M19 1 V19 H1 Z" fill="#b4b4b4"/></svg>
<div class="r" style="left:165px;top:216px;width:1px;height:23px;background:#c8c8c8;"></div>
<div class="r" style="left:282px;top:216px;width:1px;height:23px;background:#c8c8c8;"></div>
<div class="r" style="left:373px;top:216px;width:1px;height:23px;background:#c8c8c8;"></div>
<div class="r" style="left:464px;top:216px;width:1px;height:23px;background:#c8c8c8;"></div>
<div class="r" style="left:556px;top:216px;width:1px;height:23px;background:#c8c8c8;"></div>
<div class="r" style="left:647px;top:216px;width:1px;height:23px;background:#c8c8c8;"></div>
<div class="r" style="left:738px;top:216px;width:1px;height:23px;background:#c8c8c8;"></div>
<div class="r" style="left:829px;top:216px;width:1px;height:23px;background:#c8c8c8;"></div>
<div class="r" style="left:920px;top:216px;width:1px;height:23px;background:#c8c8c8;"></div>
<div class="r" style="left:1012px;top:216px;width:1px;height:23px;background:#c8c8c8;"></div>
<div class="r" style="left:1103px;top:216px;width:1px;height:23px;background:#c8c8c8;"></div>
<div class="r" style="left:1194px;top:216px;width:1px;height:23px;background:#c8c8c8;"></div>
<div class="r" style="left:1285px;top:216px;width:1px;height:23px;background:#c8c8c8;"></div>
<div class="r" style="left:1376px;top:216px;width:1px;height:23px;background:#c8c8c8;"></div>
<div class="r" style="left:1468px;top:216px;width:1px;height:23px;background:#c8c8c8;"></div>
<div class="r" style="left:71.0px;top:218px;width:60px;height:20px;text-align:center;font-size:19px;line-height:20px;color:#185c37">A</div>
<div class="r" style="left:193.5px;top:218px;width:60px;height:20px;text-align:center;font-size:19px;line-height:20px;color:#242424">B</div>
<div class="r" style="left:297.5px;top:218px;width:60px;height:20px;text-align:center;font-size:19px;line-height:20px;color:#242424">C</div>
<div class="r" style="left:388.5px;top:218px;width:60px;height:20px;text-align:center;font-size:19px;line-height:20px;color:#242424">D</div>
<div class="r" style="left:480.0px;top:218px;width:60px;height:20px;text-align:center;font-size:19px;line-height:20px;color:#242424">E</div>
<div class="r" style="left:571.5px;top:218px;width:60px;height:20px;text-align:center;font-size:19px;line-height:20px;color:#242424">F</div>
<div class="r" style="left:662.5px;top:218px;width:60px;height:20px;text-align:center;font-size:19px;line-height:20px;color:#242424">G</div>
<div class="r" style="left:753.5px;top:218px;width:60px;height:20px;text-align:center;font-size:19px;line-height:20px;color:#242424">H</div>
<div class="r" style="left:844.5px;top:218px;width:60px;height:20px;text-align:center;font-size:19px;line-height:20px;color:#242424">I</div>
<div class="r" style="left:936.0px;top:218px;width:60px;height:20px;text-align:center;font-size:19px;line-height:20px;color:#242424">J</div>
<div class="r" style="left:1027.5px;top:218px;width:60px;height:20px;text-align:center;font-size:19px;line-height:20px;color:#242424">K</div>
<div class="r" style="left:1118.5px;top:218px;width:60px;height:20px;text-align:center;font-size:19px;line-height:20px;color:#242424">L</div>
<div class="r" style="left:1209.5px;top:218px;width:60px;height:20px;text-align:center;font-size:19px;line-height:20px;color:#242424">M</div>
<div class="r" style="left:1300.5px;top:218px;width:60px;height:20px;text-align:center;font-size:19px;line-height:20px;color:#242424">N</div>
<div class="r" style="left:1392.0px;top:218px;width:60px;height:20px;text-align:center;font-size:19px;line-height:20px;color:#242424">O</div>
<div class="r" style="left:1483.5px;top:218px;width:60px;height:20px;text-align:center;font-size:19px;line-height:20px;color:#242424">P</div>
<div class="r" style="left:1509px;top:215px;width:10px;height:24px;background:#f0f0f0;"></div>
<span id="colP" class="t" style="left:1508.00px;top:218.34px;font-size:18.5px;line-height:18.5px;color:#242424;">P</span>
<div class="r" style="left:1516px;top:215px;width:20px;height:557px;background:#f0f0f0;"></div>
<div class="r" style="left:0px;top:239px;width:37px;height:532px;background:#f0f0f0;"></div>
<div class="r" style="left:0px;top:240px;width:37px;height:23px;background:#d3d3d3;"></div>
<div class="r" style="left:0px;top:263px;width:37px;height:1px;background:#b8b8b8;"></div>
<div class="r" style="left:1px;top:241.2px;width:37px;height:22px;text-align:center;font-size:19.5px;line-height:22px;color:#185c37">1</div>
<div class="r" style="left:0px;top:287px;width:37px;height:1px;background:#b8b8b8;"></div>
<div class="r" style="left:1px;top:265.2px;width:37px;height:22px;text-align:center;font-size:19.5px;line-height:22px;color:#242424">2</div>
<div class="r" style="left:0px;top:311px;width:37px;height:1px;background:#b8b8b8;"></div>
<div class="r" style="left:1px;top:289.2px;width:37px;height:22px;text-align:center;font-size:19.5px;line-height:22px;color:#242424">3</div>
<div class="r" style="left:0px;top:335px;width:37px;height:1px;background:#b8b8b8;"></div>
<div class="r" style="left:1px;top:313.2px;width:37px;height:22px;text-align:center;font-size:19.5px;line-height:22px;color:#242424">4</div>
<div class="r" style="left:0px;top:359px;width:37px;height:1px;background:#b8b8b8;"></div>
<div class="r" style="left:1px;top:337.2px;width:37px;height:22px;text-align:center;font-size:19.5px;line-height:22px;color:#242424">5</div>
<div class="r" style="left:0px;top:383px;width:37px;height:1px;background:#b8b8b8;"></div>
<div class="r" style="left:1px;top:361.2px;width:37px;height:22px;text-align:center;font-size:19.5px;line-height:22px;color:#242424">6</div>
<div class="r" style="left:0px;top:407px;width:37px;height:1px;background:#b8b8b8;"></div>
<div class="r" style="left:1px;top:385.2px;width:37px;height:22px;text-align:center;font-size:19.5px;line-height:22px;color:#242424">7</div>
<div class="r" style="left:0px;top:431px;width:37px;height:1px;background:#b8b8b8;"></div>
<div class="r" style="left:1px;top:409.2px;width:37px;height:22px;text-align:center;font-size:19.5px;line-height:22px;color:#242424">8</div>
<div class="r" style="left:0px;top:455px;width:37px;height:1px;background:#b8b8b8;"></div>
<div class="r" style="left:1px;top:433.2px;width:37px;height:22px;text-align:center;font-size:19.5px;line-height:22px;color:#242424">9</div>
<div class="r" style="left:0px;top:479px;width:37px;height:1px;background:#b8b8b8;"></div>
<div class="r" style="left:1px;top:457.2px;width:37px;height:22px;text-align:center;font-size:19.5px;line-height:22px;color:#242424">10</div>
<div class="r" style="left:0px;top:503px;width:37px;height:1px;background:#b8b8b8;"></div>
<div class="r" style="left:1px;top:481.2px;width:37px;height:22px;text-align:center;font-size:19.5px;line-height:22px;color:#242424">11</div>
<div class="r" style="left:0px;top:527px;width:37px;height:1px;background:#b8b8b8;"></div>
<div class="r" style="left:1px;top:505.2px;width:37px;height:22px;text-align:center;font-size:19.5px;line-height:22px;color:#242424">12</div>
<div class="r" style="left:0px;top:551px;width:37px;height:1px;background:#b8b8b8;"></div>
<div class="r" style="left:1px;top:529.2px;width:37px;height:22px;text-align:center;font-size:19.5px;line-height:22px;color:#242424">13</div>
<div class="r" style="left:0px;top:575px;width:37px;height:1px;background:#b8b8b8;"></div>
<div class="r" style="left:1px;top:553.2px;width:37px;height:22px;text-align:center;font-size:19.5px;line-height:22px;color:#242424">14</div>
<div class="r" style="left:0px;top:599px;width:37px;height:1px;background:#b8b8b8;"></div>
<div class="r" style="left:1px;top:577.2px;width:37px;height:22px;text-align:center;font-size:19.5px;line-height:22px;color:#242424">15</div>
<div class="r" style="left:0px;top:623px;width:37px;height:1px;background:#b8b8b8;"></div>
<div class="r" style="left:1px;top:601.2px;width:37px;height:22px;text-align:center;font-size:19.5px;line-height:22px;color:#242424">16</div>
<div class="r" style="left:0px;top:647px;width:37px;height:1px;background:#b8b8b8;"></div>
<div class="r" style="left:1px;top:625.2px;width:37px;height:22px;text-align:center;font-size:19.5px;line-height:22px;color:#242424">17</div>
<div class="r" style="left:0px;top:671px;width:37px;height:1px;background:#b8b8b8;"></div>
<div class="r" style="left:1px;top:649.2px;width:37px;height:22px;text-align:center;font-size:19.5px;line-height:22px;color:#242424">18</div>
<div class="r" style="left:0px;top:695px;width:37px;height:1px;background:#b8b8b8;"></div>
<div class="r" style="left:1px;top:673.2px;width:37px;height:22px;text-align:center;font-size:19.5px;line-height:22px;color:#242424">19</div>
<div class="r" style="left:0px;top:719px;width:37px;height:1px;background:#b8b8b8;"></div>
<div class="r" style="left:1px;top:697.2px;width:37px;height:22px;text-align:center;font-size:19.5px;line-height:22px;color:#242424">20</div>
<div class="r" style="left:0px;top:743px;width:37px;height:1px;background:#b8b8b8;"></div>
<div class="r" style="left:1px;top:721.2px;width:37px;height:22px;text-align:center;font-size:19.5px;line-height:22px;color:#242424">21</div>
<div class="r" style="left:0px;top:767px;width:37px;height:1px;background:#b8b8b8;"></div>
<div class="r" style="left:1px;top:745.2px;width:37px;height:22px;text-align:center;font-size:19.5px;line-height:22px;color:#242424">22</div>
<div class="r" style="left:0px;top:239px;width:1516px;height:1px;background:#bdbdbd;"></div>
<div class="r" style="left:37px;top:215px;width:1px;height:556px;background:#c4c4c4;"></div>
<div class="r" style="left:38px;top:240px;width:1477px;height:531px;background:#ffffff;"></div>
<div class="r" style="left:38px;top:264px;width:1477px;height:1px;background:#fafafa;"></div>
<div class="r" style="left:38px;top:288px;width:1477px;height:1px;background:#fafafa;"></div>
<div class="r" style="left:38px;top:312px;width:1477px;height:1px;background:#fafafa;"></div>
<div class="r" style="left:38px;top:336px;width:1477px;height:1px;background:#fafafa;"></div>
<div class="r" style="left:38px;top:360px;width:1477px;height:1px;background:#fafafa;"></div>
<div class="r" style="left:38px;top:384px;width:1477px;height:1px;background:#fafafa;"></div>
<div class="r" style="left:38px;top:408px;width:1477px;height:1px;background:#fafafa;"></div>
<div class="r" style="left:38px;top:432px;width:1477px;height:1px;background:#fafafa;"></div>
<div class="r" style="left:38px;top:456px;width:1477px;height:1px;background:#fafafa;"></div>
<div class="r" style="left:38px;top:480px;width:1477px;height:1px;background:#fafafa;"></div>
<div class="r" style="left:38px;top:504px;width:1477px;height:1px;background:#fafafa;"></div>
<div class="r" style="left:38px;top:528px;width:1477px;height:1px;background:#fafafa;"></div>
<div class="r" style="left:38px;top:552px;width:1477px;height:1px;background:#fafafa;"></div>
<div class="r" style="left:38px;top:576px;width:1477px;height:1px;background:#fafafa;"></div>
<div class="r" style="left:38px;top:600px;width:1477px;height:1px;background:#fafafa;"></div>
<div class="r" style="left:38px;top:624px;width:1477px;height:1px;background:#fafafa;"></div>
<div class="r" style="left:38px;top:648px;width:1477px;height:1px;background:#fafafa;"></div>
<div class="r" style="left:38px;top:672px;width:1477px;height:1px;background:#fafafa;"></div>
<div class="r" style="left:38px;top:696px;width:1477px;height:1px;background:#fafafa;"></div>
<div class="r" style="left:38px;top:720px;width:1477px;height:1px;background:#fafafa;"></div>
<div class="r" style="left:38px;top:744px;width:1477px;height:1px;background:#fafafa;"></div>
<div class="r" style="left:38px;top:768px;width:1477px;height:1px;background:#fafafa;"></div>
<div class="r" style="left:166px;top:240px;width:1px;height:531px;background:#f6f6f6;"></div>
<div class="r" style="left:283px;top:240px;width:1px;height:531px;background:#f6f6f6;"></div>
<div class="r" style="left:374px;top:240px;width:1px;height:531px;background:#f6f6f6;"></div>
<div class="r" style="left:465px;top:240px;width:1px;height:531px;background:#f6f6f6;"></div>
<div class="r" style="left:557px;top:240px;width:1px;height:531px;background:#f6f6f6;"></div>
<div class="r" style="left:648px;top:240px;width:1px;height:531px;background:#f6f6f6;"></div>
<div class="r" style="left:739px;top:240px;width:1px;height:531px;background:#f6f6f6;"></div>
<div class="r" style="left:830px;top:240px;width:1px;height:531px;background:#f6f6f6;"></div>
<div class="r" style="left:921px;top:240px;width:1px;height:531px;background:#f6f6f6;"></div>
<div class="r" style="left:1013px;top:240px;width:1px;height:531px;background:#f6f6f6;"></div>
<div class="r" style="left:1104px;top:240px;width:1px;height:531px;background:#f6f6f6;"></div>
<div class="r" style="left:1195px;top:240px;width:1px;height:531px;background:#f6f6f6;"></div>
<div class="r" style="left:1286px;top:240px;width:1px;height:531px;background:#f6f6f6;"></div>
<div class="r" style="left:1377px;top:240px;width:1px;height:531px;background:#f6f6f6;"></div>
<div class="r" style="left:1469px;top:240px;width:1px;height:531px;background:#f6f6f6;"></div>
<div class="r" style="left:38px;top:263px;width:1477px;height:1px;background:#e5e5e5;"></div>
<div class="r" style="left:38px;top:287px;width:1477px;height:1px;background:#e5e5e5;"></div>
<div class="r" style="left:38px;top:311px;width:1477px;height:1px;background:#e5e5e5;"></div>
<div class="r" style="left:38px;top:335px;width:1477px;height:1px;background:#e5e5e5;"></div>
<div class="r" style="left:38px;top:359px;width:1477px;height:1px;background:#e5e5e5;"></div>
<div class="r" style="left:38px;top:383px;width:1477px;height:1px;background:#e5e5e5;"></div>
<div class="r" style="left:38px;top:407px;width:1477px;height:1px;background:#e5e5e5;"></div>
<div class="r" style="left:38px;top:431px;width:1477px;height:1px;background:#e5e5e5;"></div>
<div class="r" style="left:38px;top:455px;width:1477px;height:1px;background:#e5e5e5;"></div>
<div class="r" style="left:38px;top:479px;width:1477px;height:1px;background:#e5e5e5;"></div>
<div class="r" style="left:38px;top:503px;width:1477px;height:1px;background:#e5e5e5;"></div>
<div class="r" style="left:38px;top:527px;width:1477px;height:1px;background:#e5e5e5;"></div>
<div class="r" style="left:38px;top:551px;width:1477px;height:1px;background:#e5e5e5;"></div>
<div class="r" style="left:38px;top:575px;width:1477px;height:1px;background:#e5e5e5;"></div>
<div class="r" style="left:38px;top:599px;width:1477px;height:1px;background:#e5e5e5;"></div>
<div class="r" style="left:38px;top:623px;width:1477px;height:1px;background:#e5e5e5;"></div>
<div class="r" style="left:38px;top:647px;width:1477px;height:1px;background:#e5e5e5;"></div>
<div class="r" style="left:38px;top:671px;width:1477px;height:1px;background:#e5e5e5;"></div>
<div class="r" style="left:38px;top:695px;width:1477px;height:1px;background:#e5e5e5;"></div>
<div class="r" style="left:38px;top:719px;width:1477px;height:1px;background:#e5e5e5;"></div>
<div class="r" style="left:38px;top:743px;width:1477px;height:1px;background:#e5e5e5;"></div>
<div class="r" style="left:38px;top:767px;width:1477px;height:1px;background:#e5e5e5;"></div>
<div class="r" style="left:165px;top:240px;width:1px;height:531px;background:#eaeaea;"></div>
<div class="r" style="left:282px;top:240px;width:1px;height:531px;background:#eaeaea;"></div>
<div class="r" style="left:373px;top:240px;width:1px;height:531px;background:#eaeaea;"></div>
<div class="r" style="left:464px;top:240px;width:1px;height:531px;background:#eaeaea;"></div>
<div class="r" style="left:556px;top:240px;width:1px;height:531px;background:#eaeaea;"></div>
<div class="r" style="left:647px;top:240px;width:1px;height:531px;background:#eaeaea;"></div>
<div class="r" style="left:738px;top:240px;width:1px;height:531px;background:#eaeaea;"></div>
<div class="r" style="left:829px;top:240px;width:1px;height:531px;background:#eaeaea;"></div>
<div class="r" style="left:920px;top:240px;width:1px;height:531px;background:#eaeaea;"></div>
<div class="r" style="left:1012px;top:240px;width:1px;height:531px;background:#eaeaea;"></div>
<div class="r" style="left:1103px;top:240px;width:1px;height:531px;background:#eaeaea;"></div>
<div class="r" style="left:1194px;top:240px;width:1px;height:531px;background:#eaeaea;"></div>
<div class="r" style="left:1285px;top:240px;width:1px;height:531px;background:#eaeaea;"></div>
<div class="r" style="left:1376px;top:240px;width:1px;height:531px;background:#eaeaea;"></div>
<div class="r" style="left:1468px;top:240px;width:1px;height:531px;background:#eaeaea;"></div>
<div class="r" style="left:1515px;top:239px;width:1px;height:533px;background:#bdbdbd;"></div>
<div class="r" style="left:0px;top:771px;width:1516px;height:1px;background:#bdbdbd;"></div>
<span id="c_percent" class="t" style="left:190.52px;top:241.68px;font-size:19.4px;line-height:19.4px;color:#000;transform:scaleX(0.9848);">Percent</span>
<span id="ca0" class="t" style="left:41.00px;top:265.68px;font-size:19.4px;line-height:19.4px;color:#000;">Good</span>
<div class="r" style="left:165px;top:266.02px;width:114px;text-align:right;font-size:19px;line-height:19px;color:#000;white-space:nowrap">20%</div>
<span id="ca1" class="t" style="left:41.00px;top:289.68px;font-size:19.4px;line-height:19.4px;color:#000;">Bad</span>
<div class="r" style="left:165px;top:290.02px;width:114px;text-align:right;font-size:19px;line-height:19px;color:#000;white-space:nowrap">30%</div>
<span id="ca2" class="t" style="left:41.00px;top:313.68px;font-size:19.4px;line-height:19.4px;color:#000;">Ugly</span>
<div class="r" style="left:165px;top:314.02px;width:114px;text-align:right;font-size:19px;line-height:19px;color:#000;white-space:nowrap">40%</div>
<span id="ca3" class="t" style="left:41.00px;top:337.68px;font-size:19.4px;line-height:19.4px;color:#000;">Indifferent</span>
<div class="r" style="left:165px;top:338.02px;width:114px;text-align:right;font-size:19px;line-height:19px;color:#000;white-space:nowrap">10%</div>
<div class="r" style="left:37px;top:238px;width:130px;height:27px;background:transparent;border:2px solid #217346;"></div>
<div class="r" style="left:162px;top:261px;width:6px;height:6px;background:#217346;border:1px solid #fff;"></div>
<svg class="r" style="left:51.2px;top:441.5px" width="253.2" height="253.2" viewBox="0 0 253.2 253.2"><defs><clipPath id="cp0"><circle cx="126.6" cy="126.6" r="125.6"/></clipPath></defs>
        <circle cx="126.6" cy="126.6" r="125.6" fill="#dae3f3"/>
        <circle cx="126.6" cy="-13.900000000000006" r="125.6" fill="#b4c7e7" clip-path="url(#cp0)"/></svg>
<div class="r" style="left:77.80px;top:489.30px;width:200px;text-align:center;font-size:18.9px;line-height:18.9px;font-weight:700;color:#000;white-space:nowrap">Good</div>
<div class="r" style="left:77.80px;top:591.79px;width:200px;text-align:center;font-size:41.6px;line-height:41.6px;font-weight:700;color:#000;white-space:nowrap">20%</div>
<svg class="r" style="left:338.6px;top:441.5px" width="253.2" height="253.2" viewBox="0 0 253.2 253.2"><defs><clipPath id="cp1"><circle cx="126.6" cy="126.6" r="125.6"/></clipPath></defs>
        <circle cx="126.6" cy="126.6" r="125.6" fill="#dae3f3"/>
        <circle cx="126.6" cy="-13.900000000000006" r="125.6" fill="#b4c7e7" clip-path="url(#cp1)"/></svg>
<div class="r" style="left:365.20px;top:489.30px;width:200px;text-align:center;font-size:18.9px;line-height:18.9px;font-weight:700;color:#000;white-space:nowrap">Bad</div>
<div class="r" style="left:365.20px;top:591.79px;width:200px;text-align:center;font-size:41.6px;line-height:41.6px;font-weight:700;color:#000;white-space:nowrap">30%</div>
<svg class="r" style="left:624.7px;top:441.5px" width="253.2" height="253.2" viewBox="0 0 253.2 253.2"><defs><clipPath id="cp2"><circle cx="126.6" cy="126.6" r="125.6"/></clipPath></defs>
        <circle cx="126.6" cy="126.6" r="125.6" fill="#dae3f3"/>
        <circle cx="126.6" cy="-13.900000000000006" r="125.6" fill="#b4c7e7" clip-path="url(#cp2)"/></svg>
<div class="r" style="left:651.30px;top:489.30px;width:200px;text-align:center;font-size:18.9px;line-height:18.9px;font-weight:700;color:#000;white-space:nowrap">Ugly</div>
<div class="r" style="left:651.30px;top:591.79px;width:200px;text-align:center;font-size:41.6px;line-height:41.6px;font-weight:700;color:#000;white-space:nowrap">40%</div>
<svg class="r" style="left:910.6px;top:441.5px" width="253.2" height="253.2" viewBox="0 0 253.2 253.2"><defs><clipPath id="cp3"><circle cx="126.6" cy="126.6" r="125.6"/></clipPath></defs>
        <circle cx="126.6" cy="126.6" r="125.6" fill="#dae3f3"/>
        <circle cx="126.6" cy="-13.900000000000006" r="125.6" fill="#b4c7e7" clip-path="url(#cp3)"/></svg>
<div class="r" style="left:937.20px;top:489.30px;width:200px;text-align:center;font-size:18.9px;line-height:18.9px;font-weight:700;color:#000;white-space:nowrap">Indifferent</div>
<div class="r" style="left:937.20px;top:591.79px;width:200px;text-align:center;font-size:41.6px;line-height:41.6px;font-weight:700;color:#000;white-space:nowrap">10%</div>
<div class="r" style="left:0px;top:772px;width:1536px;height:23px;background:#e6e6e6;"></div>
<svg class="r" style="left:23px;top:781px" width="5" height="7" viewBox="0 0 5 7"><path d="M4.5 0 V7 L0.5 3.5 Z" fill="#c4c4c4"/></svg>
<svg class="r" style="left:45px;top:781px" width="5" height="7" viewBox="0 0 5 7"><path d="M0.5 0 V7 L4.5 3.5 Z" fill="#c4c4c4"/></svg>
<div class="r" style="left:82.5px;top:771px;width:63px;height:22px;background:#fff;border-left:1px solid #bdbdbd;border-right:1px solid #bdbdbd;"></div>
<div class="r" style="left:82.5px;top:790px;width:63px;height:2px;background:#107c41;"></div>
<span id="sheet1" class="t" style="left:92.00px;top:773.50px;font-size:13px;line-height:13px;color:#107c41;font-weight:700;">Sheet1</span>
<svg class="r" style="left:171px;top:774px" width="18" height="18" viewBox="0 0 18 18"><circle cx="9" cy="9" r="7.7" fill="none" stroke="#8a8a8a" stroke-width="1.1"/><path d="M9 5 V13 M5 9 H13" stroke="#616161" stroke-width="1.3"/></svg>
<div class="r" style="left:909px;top:772px;width:627px;height:22px;background:#f0f0f0;"></div>
<div class="r" style="left:919.3px;top:777.5px;width:1.8px;height:1.8px;background:#8a8a8a;"></div>
<div class="r" style="left:919.3px;top:781px;width:1.8px;height:1.8px;background:#8a8a8a;"></div>
<div class="r" style="left:919.3px;top:784.5px;width:1.8px;height:1.8px;background:#8a8a8a;"></div>
<div class="r" style="left:932px;top:772px;width:586px;height:22px;background:#e6e6e6;"></div>
<div class="r" style="left:932px;top:772px;width:584px;height:17.5px;background:#f4f4f4;border-radius:8px;"></div>
<svg class="r" style="left:936.5px;top:777px" width="8" height="10" viewBox="0 0 8 10"><path d="M7.5 0.5 V9.5 L0.5 5 Z" fill="#6e6e6e"/></svg>
<div class="r" style="left:949px;top:777px;width:515px;height:9.5px;background:#6e6e6e;border-radius:5px;"></div>
<svg class="r" style="left:1505.5px;top:777px" width="8" height="10" viewBox="0 0 8 10"><path d="M0.5 0.5 V9.5 L7.5 5 Z" fill="#6e6e6e"/></svg>
<div class="r" style="left:1518px;top:772px;width:18px;height:22px;background:#e6e6e6;"></div>
<div class="r" style="left:1517px;top:215px;width:18px;height:557px;background:#f4f4f4;border-radius:8px;"></div>
<svg class="r" style="left:1521px;top:219px" width="10" height="8" viewBox="0 0 10 8"><path d="M0.5 7.5 H9.5 L5 0.5 Z" fill="#6e6e6e"/></svg>
<div class="r" style="left:1521.5px;top:232px;width:9px;height:501px;background:#6e6e6e;border-radius:4.5px;"></div>
<svg class="r" style="left:1521px;top:761px" width="10" height="8" viewBox="0 0 10 8"><path d="M0.5 0.5 H9.5 L5 7.5 Z" fill="#6e6e6e"/></svg>
<div class="r" style="left:0px;top:795px;width:1536px;height:20px;background:#f3f3f3;"></div>
<div class="r" style="left:0px;top:794px;width:1536px;height:1px;background:#d2d2d2;"></div>
<span id="ready" class="t" style="left:7.09px;top:800.77px;font-size:11.5px;line-height:11.5px;color:#424242;transform:scaleX(0.9062);">Ready</span>
<svg class="r" style="left:55px;top:798px" width="17" height="15" viewBox="0 0 17 15">
      <rect x="1.2" y="1.4" width="13.8" height="11.6" fill="none" stroke="#666" stroke-width="1.2"/>
      <rect x="1.2" y="1.2" width="13.8" height="2.6" fill="#666"/>
      <path d="M3.3 6 H5.8 M3.3 8.5 H5" stroke="#888" stroke-width="1"/>
      <circle cx="10.6" cy="9.9" r="4.3" fill="#f3f3f3" stroke="#555" stroke-width="1.3"/>
      <circle cx="10.6" cy="9.9" r="1.7" fill="#222"/>
    </svg>
<svg class="r" style="left:87px;top:797px" width="17" height="17" viewBox="0 0 17 17">
      <circle cx="7.1" cy="3.6" r="1.9" fill="none" stroke="#555" stroke-width="1.2"/>
      <path d="M5.2 5.3 Q3 4 2.2 5.6 Q2 7.3 4.4 7.3 Q5.6 8.4 5 11.2 Q4.3 14.6 6.6 14.8" fill="none" stroke="#555" stroke-width="1.2" stroke-linecap="round"/>
      <path d="M9 5.3 Q11.2 4 12 5.8 Q12.3 7.4 10.6 7.9 V10" fill="none" stroke="#555" stroke-width="1.2" stroke-linecap="round"/>
      <path d="M8 11.6 L10.1 14.4 L15.3 9" fill="none" stroke="#555" stroke-width="1.2" stroke-linecap="round"/>
    </svg>
<span id="access" class="t" style="left:106.00px;top:800.77px;font-size:11.5px;line-height:11.5px;color:#424242;transform:scaleX(0.9127);">Accessibility: Good to go</span>
<div class="r" style="left:1239px;top:795px;width:39px;height:20px;background:#dcdcdc;"></div>
<svg class="r" style="left:1250px;top:797px" width="16" height="15" viewBox="0 0 16 15"><rect x="1" y="1" width="14" height="13" fill="none" stroke="#424242" stroke-width="1.2"/><path d="M5.7 1 V14 M10.3 1 V14 M1 5.3 H15 M1 9.7 H15" stroke="#424242" stroke-width="1.2"/></svg>
<svg class="r" style="left:1290px;top:797px" width="16" height="15" viewBox="0 0 16 15"><rect x="1" y="1" width="14" height="13" fill="none" stroke="#424242" stroke-width="1.2"/><rect x="4" y="3" width="8" height="9" fill="none" stroke="#616161" stroke-width="1"/><path d="M5.5 5.5 H10.5 M5.5 7.5 H10.5 M5.5 9.5 H10.5" stroke="#8a8a8a" stroke-width="0.8"/></svg>
<svg class="r" style="left:1330px;top:797px" width="16" height="15" viewBox="0 0 16 15"><rect x="1" y="1" width="14" height="13" fill="none" stroke="#424242" stroke-width="1.2"/><path d="M4 1 V7 H11 V1 M7.5 1 V7" fill="none" stroke="#424242" stroke-width="1.1"/></svg>
<div class="r" style="left:1364px;top:805px;width:7px;height:1.2px;background:#616161;"></div>
<div class="r" style="left:1377px;top:805px;width:100px;height:1px;background:#8a8a8a;"></div>
<div class="r" style="left:1426px;top:801px;width:1px;height:9px;background:#8a8a8a;"></div>
<div class="r" style="left:1430px;top:799px;width:5px;height:12px;background:#616161;"></div>
<div class="r" style="left:1481.5px;top:805px;width:8px;height:1.2px;background:#616161;"></div>
<div class="r" style="left:1485px;top:801.3px;width:1.2px;height:8px;background:#616161;"></div>
<span id="zoom" class="t" style="left:1502.14px;top:801.27px;font-size:11.5px;line-height:11.5px;color:#424242;transform:scaleX(0.8571);">130%</span></body></html>
